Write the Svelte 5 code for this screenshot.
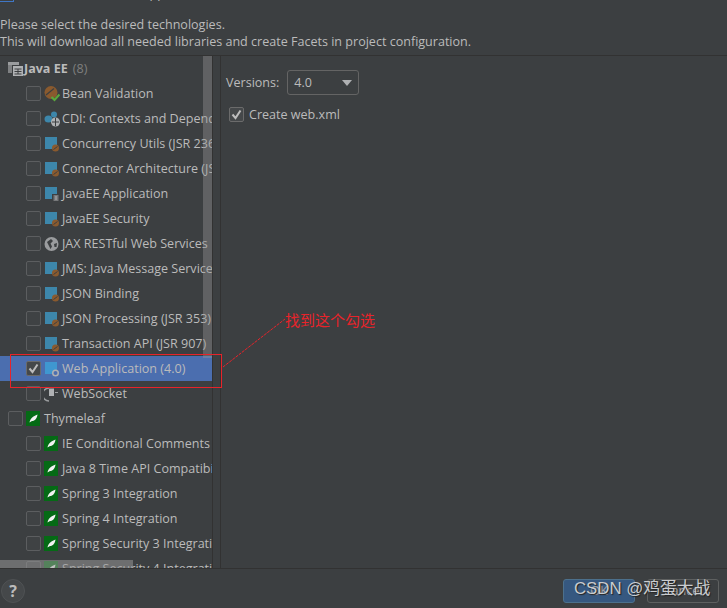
<script>
  const javaEE = [
    { name: "Bean Validation", icon: "bean" },
    { name: "CDI: Contexts and Dependency Injection", icon: "cdi" },
    { name: "Concurrency Utils (JSR 236)", icon: "ee" },
    { name: "Connector Architecture (JSR 322)", icon: "ee" },
    { name: "JavaEE Application", icon: "app" },
    { name: "JavaEE Security", icon: "ee" },
    { name: "JAX RESTful Web Services", icon: "globe" },
    { name: "JMS: Java Message Service", icon: "ee" },
    { name: "JSON Binding", icon: "ee" },
    { name: "JSON Processing (JSR 353)", icon: "ee" },
    { name: "Transaction API (JSR 907)", icon: "ee" },
    { name: "Web Application (4.0)", icon: "web", checked: true, selected: true },
    { name: "WebSocket", icon: "socket" },
  ];

  const thymeleaf = [
    "IE Conditional Comments",
    "Java 8 Time API Compatibility",
    "Spring 3 Integration",
    "Spring 4 Integration",
    "Spring Security 3 Integration",
    "Spring Security 4 Integration",
  ];
</script>

{#snippet check(on)}
  <span class="box" class:on>
    {#if on}
      <svg width="11" height="11" viewBox="0 0 11 11"><path d="M1.5 5.5 L4.5 9 L9.5 1.5" fill="none" stroke="#bdbdbd" stroke-width="2" /></svg>
    {/if}
  </span>
{/snippet}

{#snippet leaf()}
  <svg class="icon" width="16" height="16" viewBox="0 0 16 16">
    <rect x="0" y="0" width="14" height="15" fill="#056a15" />
    <path d="M3.5 11.5 C4 8 7 5 11.5 3.5 C11 7.5 9 10 6 10 Z" fill="#f2f2f2" />
  </svg>
{/snippet}

{#snippet icon(kind)}
  <svg class="icon" width="16" height="16" viewBox="0 0 16 16">
    {#if kind === "bean"}
      <circle cx="7" cy="6.5" r="6.5" fill="#8a5a2e" />
      <path d="M2 9 L10 2.5" stroke="#3c3f41" stroke-width="1.2" />
      <path d="M7.5 11 L10.5 14 L15.5 8.5" fill="none" stroke="#59a83c" stroke-width="2.2" />
    {:else if kind === "cdi"}
      <ellipse cx="10" cy="3.5" rx="3" ry="3" fill="#3d87ab" />
      <ellipse cx="4.5" cy="8" rx="4" ry="3.5" fill="#3d87ab" />
      <circle cx="11.5" cy="11" r="4.5" fill="#afb1b3" />
      <path d="M8 11 H15 M11.5 7 V15" stroke="#3c3f41" stroke-width="1" />
    {:else if kind === "globe"}
      <circle cx="7.5" cy="8" r="7" fill="#9a9c9e" />
      <path d="M3 6 L7 3 L9 5 L6.5 7.5 L8 10.5 L6.5 13 L5 10 Z M10 8 L13 7 L12.5 11 L10.5 11 Z" fill="#3c3f41" />
    {:else if kind === "socket"}
      <path d="M5 2 A6.5 6.5 0 0 0 5 15" fill="none" stroke="#9a9c9e" stroke-width="1.5" />
      <path d="M5 2.5 H10 V10 H5 Z" fill="#afb1b3" />
      <path d="M11 6.5 H14" stroke="#9a9c9e" />
    {:else}
      <rect x="1" y="1" width="12" height="12" fill={kind === "web" ? "#3f97d0" : "#3d87ab"} />
      {#if kind === "ee"}
        <circle cx="11.5" cy="12" r="3.5" fill="#8a5a2e" />
        <path d="M9.5 13.5 L13.5 10.5" stroke="#3c3f41" />
      {:else if kind === "app"}
        <rect x="8" y="8" width="8" height="8" fill="#3c3f41" />
        <path d="M9.5 10 H14.5 M9.5 12 H14.5 M9.5 14 H14.5 M12 10 V14" stroke="#afb1b3" />
      {:else if kind === "web"}
        <circle cx="11.5" cy="12" r="3.5" fill="#afb1b3" />
        <circle cx="11.5" cy="12" r="2" fill="#4b6eaf" />
      {/if}
    {/if}
  </svg>
{/snippet}

<div class="dialog">
  <div class="titlebit"></div>
  <span class="title">Add Frameworks Support</span>
  <div class="intro">
    <p>Please select the desired technologies.</p>
    <p>This will download all needed libraries and create Facets in project configuration.</p>
  </div>

  <div class="panels">
    <div class="tree">
      <div class="rows">
        <div class="row group">
          <svg class="icon" width="16" height="16" viewBox="0 0 16 16">
            <path d="M0 1 H11 V4 H0 Z" fill="#9a9c9e" />
            <path d="M0 4 H4 V12 H0 Z" fill="#7f8183" />
            <rect x="5" y="5" width="10" height="10" fill="#afb1b3" />
            <path d="M6.5 8 H13.5 M6.5 10.5 H13.5 M6.5 13 H13.5 M10 8 V13" stroke="#3c3f41" />
          </svg>
          <b>Java EE</b>
          <span class="count">(8)</span>
        </div>
        {#each javaEE as item}
          <div class="row child" class:selected={item.selected}>
            {@render check(item.checked)}
            {@render icon(item.icon)}
            <span class="name">{item.name}</span>
          </div>
        {/each}
        <div class="row parent">
          {@render check(false)}
          {@render leaf()}
          <span class="name">Thymeleaf</span>
        </div>
        {#each thymeleaf as name}
          <div class="row child">
            {@render check(false)}
            {@render leaf()}
            <span class="name">{name}</span>
          </div>
        {/each}
      </div>
      <div class="vthumb"></div>
      <div class="hthumb"></div>
    </div>

    <div class="detail">
      <div class="versions">
        <span>Versions:</span>
        <div class="select">
          <span>4.0</span>
          <i class="caret"></i>
        </div>
      </div>
      <label class="create">
        {@render check(true)}
        <span>Create web.xml</span>
      </label>
    </div>
  </div>

  <div class="footer">
    <div class="help">?</div>
    <div class="buttons">
      <div class="btn primary">OK</div>
      <div class="btn">Cancel</div>
    </div>
  </div>

  <!-- annotation drawn on top of the screenshot -->
  <div class="redbox"></div>
  <svg class="redline" width="70" height="50" viewBox="0 0 70 50"><path d="M1 49 L63 1" stroke="#e8232a" stroke-dasharray="3 1" fill="none" /></svg>
  <span class="note">找到这个勾选</span>
  <span class="mark">CSDN @鸡蛋大战</span>
</div>

<style>
  :global(body) {
    margin: 0;
    background: #3c3f41;
  }
  .dialog {
    position: relative;
    width: 727px;
    height: 608px;
    overflow: hidden;
    background: #3c3f41;
    color: #bbbbbb;
    font: 12.55px "Open Sans", "Noto Sans", sans-serif;
    display: flex;
    flex-direction: column;
  }
  .titlebit {
    position: absolute;
    left: 0;
    top: 0;
    width: 13px;
    height: 1px;
    border-right: 1px solid #3f76c4;
    border-bottom: 1px solid #3f76c4;
  }
  .title {
    position: absolute;
    left: 33px;
    top: -15px;
    white-space: nowrap;
  }
  .intro {
    height: 55px;
    padding-top: 16px;
    box-sizing: border-box;
    flex: none;
  }
  .intro p {
    margin: 0;
    height: 17px;
    line-height: 17px;
  }
  .panels {
    flex: none;
    height: 514px;
    display: flex;
    border-top: 1px solid #323232;
    border-bottom: 1px solid #323232;
    box-sizing: border-box;
  }
  .tree {
    position: relative;
    width: 212px;
    flex: none;
    overflow: hidden;
    border-right: 1px solid #323232;
  }
  .rows {
    width: 212px;
  }
  .row {
    height: 25px;
    display: flex;
    align-items: center;
    white-space: nowrap;
    overflow: hidden;
  }
  .group {
    padding-left: 8px;
    gap: 0;
  }
  .group b {
    font-weight: 700;
  }
  .count {
    color: #7f7f7f;
    margin-left: 5px;
  }
  .parent {
    padding-left: 8px;
    gap: 3px;
  }
  .child {
    padding-left: 26px;
    gap: 3px;
  }
  .selected {
    background: #4b6eaf;
  }
  .name {
    margin-left: -1px;
  }
  .box {
    width: 13px;
    height: 13px;
    flex: none;
    border: 1px solid #5c5e60;
    border-radius: 2px;
    background: #3f4244;
    display: inline-flex;
    align-items: center;
    justify-content: center;
  }
  .box.on {
    background: #45484a;
    border-color: #6b6b6b;
  }
  .icon {
    flex: none;
  }
  .vthumb {
    position: absolute;
    right: 0;
    top: 0;
    width: 9px;
    height: 302px;
    background: rgba(150, 150, 150, 0.4);
  }
  .hthumb {
    position: absolute;
    left: 0;
    bottom: 0;
    width: 133px;
    height: 8px;
    background: rgba(150, 150, 150, 0.55);
  }
  .detail {
    flex: 1;
    margin-left: 7px;
    border-left: 1px solid #323232;
    padding: 14px 0 0 5px;
  }
  .versions {
    display: flex;
    align-items: center;
    gap: 8px;
  }
  .select {
    height: 23px;
    border: 1px solid #646464;
    border-radius: 3px;
    display: flex;
    align-items: center;
    justify-content: space-between;
    padding: 0 6px;
    width: 58px;
  }
  .caret {
    width: 0;
    height: 0;
    border-left: 5px solid transparent;
    border-right: 5px solid transparent;
    border-top: 6px solid #afb1b3;
  }
  .create {
    display: flex;
    align-items: center;
    gap: 5px;
    margin-top: 11px;
    padding-left: 3px;
  }
  .footer {
    flex: 1;
    display: flex;
    justify-content: space-between;
    align-items: center;
    padding: 5px 8px 0 1px;
  }
  .help {
    width: 22px;
    height: 22px;
    border-radius: 50%;
    border: 1px solid #4f5254;
    background: #45484a;
    font-weight: 700;
    text-align: center;
    line-height: 22px;
    font-size: 16px;
  }
  .buttons {
    display: flex;
    gap: 12px;
  }
  .btn {
    width: 70px;
    height: 22px;
    border: 1px solid #5e6060;
    border-radius: 3px;
    text-align: center;
    line-height: 22px;
    color: #a8a8a8;
  }
  .primary {
    background: #365880;
    border-color: #4c708c;
  }
  .redbox {
    position: absolute;
    left: 10px;
    top: 354px;
    width: 210px;
    height: 32px;
    border: 1px solid #e8232a;
  }
  .redline {
    position: absolute;
    left: 222px;
    top: 318px;
  }
  .note {
    position: absolute;
    left: 285px;
    top: 309px;
    color: #e8232a;
    font: 15px "Noto Sans CJK SC", sans-serif;
  }
  .mark {
    position: absolute;
    left: 574px;
    top: 575px;
    color: #c9cccf;
    font: 16.8px "Liberation Sans", "Noto Sans CJK SC", sans-serif;
    text-shadow: 1px 1px 1px #222;
  }
</style>
